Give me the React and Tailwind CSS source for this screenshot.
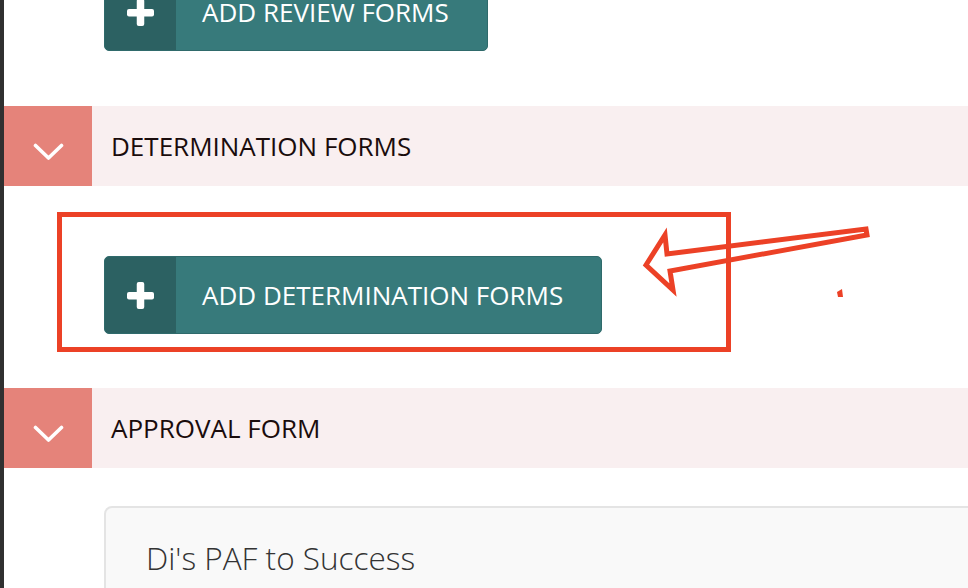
import React from 'react';

const FONT = { fontFamily: '"Open Sans", "Liberation Sans", sans-serif' };

function Plus() {
  return (
    <svg width="27" height="27" viewBox="0 0 27 27" aria-hidden="true">
      <rect x="0" y="10" width="27" height="7.5" rx="2" fill="#fff" />
      <rect x="9.75" y="0" width="7.5" height="27" rx="2" fill="#fff" />
    </svg>
  );
}

function Chevron() {
  return (
    <svg width="31" height="18" viewBox="0 0 31 18" aria-hidden="true">
      <polyline points="2.5,2.5 15.5,15 28.5,2.5" fill="none" stroke="#fff" strokeWidth="3.6" strokeLinecap="round" strokeLinejoin="round" />
    </svg>
  );
}

function AddButton({ label, className = '' }) {
  return (
    <button
      type="button"
      className={`flex h-[78px] items-stretch overflow-hidden rounded-[5px] border border-[#2f6a6b] bg-[#377a7b] text-left text-white ${className}`}
    >
      <span className="flex w-[71px] items-center justify-center bg-[#2c6162]">
        <Plus />
      </span>
      <span className="flex items-center pl-[26px] pr-[38px] text-[26px] leading-none">{label}</span>
    </button>
  );
}

function SectionHeader({ title }) {
  return (
    <div className="flex h-[80px] shrink-0 items-stretch bg-[#f9eff0]">
      <div className="flex w-[88px] items-center justify-center bg-[#e5837a] pt-[12px]">
        <Chevron />
      </div>
      <div className="flex items-center pl-[19px] text-[26px] text-[#1a0c0c]">{title}</div>
    </div>
  );
}

export default function App() {
  return (
    <div className="relative h-[588px] w-[968px] overflow-hidden bg-white" style={FONT}>
      <div className="flex h-full">
        <div className="w-[4px] shrink-0 bg-[#303030]" />
        <div className="flex min-w-0 flex-1 flex-col">
          <div className="shrink-0 pb-[55px] pl-[100px]">
            <AddButton label="ADD REVIEW FORMS" className="-mt-[27px]" />
          </div>

          <SectionHeader title="DETERMINATION FORMS" />

          <div className="relative shrink-0 pb-[54px] pl-[100px] pt-[70px]">
            <AddButton label="ADD DETERMINATION FORMS" />
            <div className="pointer-events-none absolute left-[53px] top-[26px] h-[140px] w-[674px] border-[5px] border-[#ec4126]" />
          </div>

          <SectionHeader title="APPROVAL FORM" />

          <div className="shrink-0 pl-[100px] pt-[38px]">
            <div className="-mr-[40px] rounded-[8px] border-2 border-[#e4e4e4] bg-[#f9f9f9] pl-[40px] pt-[30px] pb-[40px]">
              <div className="text-[31.5px] font-light leading-tight text-[#333]">Di's PAF to Success</div>
            </div>
          </div>
        </div>
      </div>

      {/* annotation arrow */}
      <svg className="pointer-events-none absolute left-0 top-0" width="968" height="588" viewBox="0 0 968 588" aria-hidden="true">
        <polygon
          points="646,265 665,235 667,254 866,229 867,235 670,271 673,290"
          fill="none"
          stroke="#ec4126"
          strokeWidth="5"
          strokeLinejoin="miter"
        />
        <polygon points="837,292 842,289 843,297 838,297" fill="#ec4126" />
      </svg>
    </div>
  );
}
